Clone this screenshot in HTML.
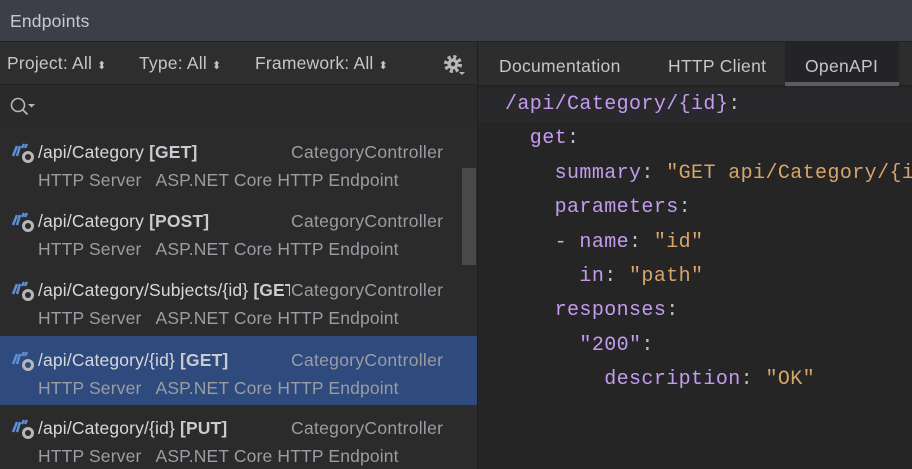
<!DOCTYPE html>
<html><head><style>
*{margin:0;padding:0;box-sizing:border-box}
html,body{width:912px;height:469px;overflow:hidden}
body{background:#2b2b2b;font-family:"Liberation Sans",sans-serif;color:#bbbcc0;position:relative}
.title{position:absolute;left:0;top:0;width:912px;height:42px;background:#3c3f47;border-bottom:1px solid #222;font-size:17.5px;padding:11px 10px;color:#c8cad0;letter-spacing:0.2px}
.left{position:absolute;left:0;top:42px;width:477px;height:427px;background:#2b2b2b}
.tb{position:absolute;top:0;left:0;width:477px;height:43px;background:#2e2e2e;border-bottom:1px solid #232323;font-size:17.5px;letter-spacing:0.2px}
.tb span{position:absolute;top:11px;color:#c4c6cc}
.search{position:absolute;top:44px;left:0;width:477px;height:41px;background:#2a2a2a}
.row{position:absolute;left:0;width:462px;height:69px;font-size:17.5px;letter-spacing:0.15px}
.row.sel{background:#2f4a7c}
.r1{position:absolute;left:38px;top:14px;color:#d6d8dc;white-space:nowrap;width:252px;overflow:hidden}
.r1 b{color:#c9cbd0}
.ctl{position:absolute;left:291px;top:14px;color:#9a9da3;letter-spacing:0.3px}
.r2{position:absolute;left:38px;top:42px;color:#9a9da3;white-space:nowrap}
.ic{position:absolute;left:10px;top:14px}
.right{position:absolute;left:478px;top:42px;width:434px;height:427px;background:#252526;overflow:hidden}
.tabs{position:absolute;top:0;left:0;width:434px;height:44px;background:#2d2d2e;border-bottom:1px solid #1f1f1f;font-size:17.5px;letter-spacing:0.3px}
.tabs span{position:absolute;top:14px;color:#c4c6cc}
.code{position:absolute;top:46px;left:0;width:434px;font-family:"Liberation Mono",monospace;font-size:20px;letter-spacing:0.4px;color:#bcbec4}
.code div{height:34.4px;line-height:34.4px;padding-left:27px;white-space:pre}
.k{color:#c59bf0}.s{color:#d7a56a}
</style></head><body>
<div class="title">Endpoints</div>
<div class="left">
<div class="tb">
<span style="left:7px">Project: All <small style="font-size:11px">⬍</small></span>
<span style="left:139px">Type: All <small style="font-size:11px">⬍</small></span>
<span style="left:255px">Framework: All <small style="font-size:11px">⬍</small></span>
<svg style="position:absolute;left:442px;top:11px" width="26" height="26" viewBox="0 0 26 26"><circle cx="11" cy="11" r="7" fill="none" stroke="#b5b7bb" stroke-width="4" stroke-dasharray="3 2.5"/><circle cx="11" cy="11" r="5.5" fill="#b5b7bb"/><circle cx="11" cy="11" r="2.2" fill="#2e2e2e"/><path d="M17 19h6l-3 3z" fill="#b5b7bb"/></svg>
</div>
<div class="search"><svg style="position:absolute;left:9px;top:10px" width="28" height="22"><circle cx="9" cy="9" r="6.5" fill="none" stroke="#b5b7bb" stroke-width="1.6"/><path d="M13.5 13.5l5 5" stroke="#b5b7bb" stroke-width="1.8"/><path d="M19 8h7l-3.5 3.5z" fill="#b5b7bb"/></svg></div>
</div>
<div style="position:absolute;left:462px;top:168px;width:14px;height:97px;background:#4a4a4b"></div>
<div class="row" style="top:128px"><svg class="ic" width="26" height="24"><path d="M3 14l4-10M7 14l3-10M12 6l2-4M15 6l2-4" stroke="#5b8fd8" stroke-width="2.5"/><circle cx="18" cy="15" r="6" fill="#b5b7bb"/><circle cx="18" cy="15" r="3" fill="#2b2b2b"/></svg><div class="r1">/api/Category <b>[GET]</b></div><div class="ctl">CategoryController</div><div class="r2">HTTP Server &nbsp; ASP.NET Core HTTP Endpoint</div></div>
<div class="row" style="top:197px"><svg class="ic" width="26" height="24"><path d="M3 14l4-10M7 14l3-10M12 6l2-4M15 6l2-4" stroke="#5b8fd8" stroke-width="2.5"/><circle cx="18" cy="15" r="6" fill="#b5b7bb"/><circle cx="18" cy="15" r="3" fill="#2b2b2b"/></svg><div class="r1">/api/Category <b>[POST]</b></div><div class="ctl">CategoryController</div><div class="r2">HTTP Server &nbsp; ASP.NET Core HTTP Endpoint</div></div>
<div class="row" style="top:266px"><svg class="ic" width="26" height="24"><path d="M3 14l4-10M7 14l3-10M12 6l2-4M15 6l2-4" stroke="#5b8fd8" stroke-width="2.5"/><circle cx="18" cy="15" r="6" fill="#b5b7bb"/><circle cx="18" cy="15" r="3" fill="#2b2b2b"/></svg><div class="r1">/api/Category/Subjects/{id} <b>[GET]</b></div><div class="ctl">CategoryController</div><div class="r2">HTTP Server &nbsp; ASP.NET Core HTTP Endpoint</div></div>
<div class="row sel" style="top:336px;width:477px"><svg class="ic" width="26" height="24"><path d="M3 14l4-10M7 14l3-10M12 6l2-4M15 6l2-4" stroke="#5b8fd8" stroke-width="2.5"/><circle cx="18" cy="15" r="6" fill="#b5b7bb"/><circle cx="18" cy="15" r="3" fill="#2f4a7c"/></svg><div class="r1">/api/Category/{id} <b>[GET]</b></div><div class="ctl">CategoryController</div><div class="r2">HTTP Server &nbsp; ASP.NET Core HTTP Endpoint</div></div>
<div class="row" style="top:404px"><svg class="ic" width="26" height="24"><path d="M3 14l4-10M7 14l3-10M12 6l2-4M15 6l2-4" stroke="#5b8fd8" stroke-width="2.5"/><circle cx="18" cy="15" r="6" fill="#b5b7bb"/><circle cx="18" cy="15" r="3" fill="#2b2b2b"/></svg><div class="r1">/api/Category/{id} <b>[PUT]</b></div><div class="ctl">CategoryController</div><div class="r2">HTTP Server &nbsp; ASP.NET Core HTTP Endpoint</div></div>
<div style="position:absolute;left:477px;top:42px;width:1px;height:427px;background:#1e1e1e"></div>
<div class="right">
<div class="tabs">
<span style="left:21px">Documentation</span>
<span style="left:190px">HTTP Client</span>
<div style="position:absolute;left:307px;top:0;width:114px;height:44px;background:#242426;border-bottom:4px solid #5a5c60"></div>
<span style="left:327px">OpenAPI</span>
</div>
<div class="code"><div style="background:#29292b"><span class="k">/api/Category/{id}</span>:</div><div><span class="k">  get</span>:</div><div><span class="k">    summary</span>: <span class="s">"GET api/Category/{id}"</span></div><div><span class="k">    parameters</span>:</div><div>    - <span class="k">name</span>: <span class="s">"id"</span></div><div><span class="k">      in</span>: <span class="s">"path"</span></div><div><span class="k">    responses</span>:</div><div><span class="k">      "200"</span>:</div><div><span class="k">        description</span>: <span class="s">"OK"</span></div></div>
</div>
</body></html>
